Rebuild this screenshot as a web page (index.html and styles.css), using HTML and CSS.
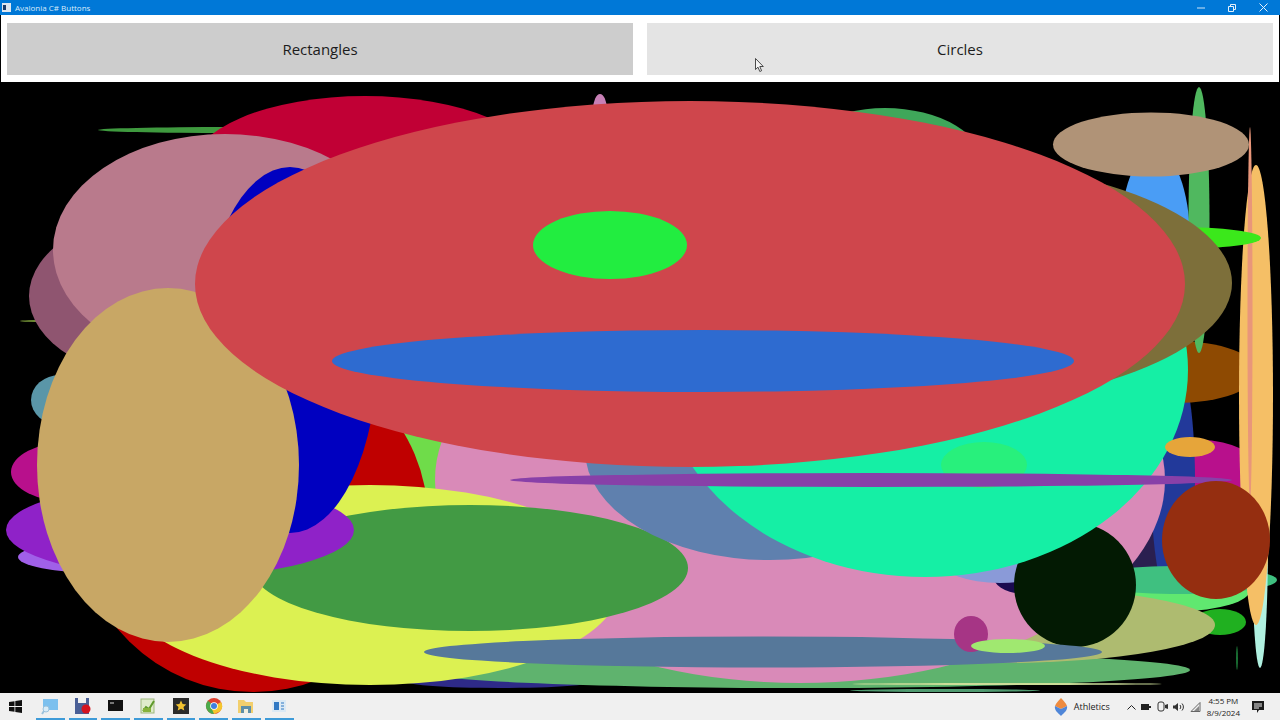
FILE: index.html
```html
<!DOCTYPE html>
<html lang="en">
<head>
    <meta charset="UTF-8">
    <title>Avalonia C# Buttons</title>
    <link rel="stylesheet" href="styles.css">
</head>
<body>
    <div class="titlebar">
        <svg class="app-icon" width="9" height="9" viewBox="0 0 9 9"><rect width="9" height="9" fill="#dfe6ee"/><rect x="1" y="2" width="3" height="5" fill="#1c3c68"/></svg>
        <span class="title">Avalonia C# Buttons</span>
        <div class="win-controls">
            <svg width="8" height="8" viewBox="0 0 8 8"><path d="M0 4h8" stroke="#cfe4f7" fill="none"/></svg>
            <svg width="8" height="8" viewBox="0 0 8 8"><path d="M.5 2.500h5v5h-5zM2.500 2.500v-2h5v5h-2" stroke="#e6f1fb" fill="none"/></svg>
            <svg width="9" height="9" viewBox="0 0 9 9"><path d="M.5.500l8 8M8.500.500l-8 8" stroke="#e6f1fb" fill="none"/></svg>
        </div>
    </div>

    <div class="toolbar">
        <button class="btn btn-pressed">Rectangles</button>
        <button class="btn">Circles</button>
    </div>

    <svg class="canvas" width="1280" height="611" viewBox="0 82 1280 611">
        <ellipse cx="230" cy="130" rx="132" ry="3" fill="#3f9a3f"/>
        <ellipse cx="50" cy="321" rx="30" ry="1" fill="#7a9a3a"/>
        <ellipse cx="365" cy="170" rx="175" ry="74" fill="#c10035"/>
        <ellipse cx="600" cy="110" rx="7" ry="16" fill="#c77fb5"/>
        <ellipse cx="885" cy="168" rx="100" ry="60" fill="#3fa75a"/>
        <ellipse cx="600" cy="480" rx="205" ry="160" fill="#6fdc4a"/>
        <ellipse cx="253" cy="520" rx="175" ry="172" fill="#bf0000"/>
        <ellipse cx="170" cy="296" rx="141" ry="85" fill="#8f5570"/>
        <ellipse cx="225" cy="250" rx="172" ry="116" fill="#b97a8c"/>
        <ellipse cx="60" cy="400" rx="29" ry="25" fill="#5a96a8"/>
        <ellipse cx="70" cy="472" rx="59" ry="30" fill="#b8108c"/>
        <ellipse cx="100" cy="557" rx="82" ry="16" fill="#a060e8"/>
        <ellipse cx="500" cy="680" rx="100" ry="8" fill="#2e2a88"/>
        <ellipse cx="800" cy="670" rx="390" ry="18" fill="#5fb36e"/>
        <ellipse cx="1120" cy="490" rx="70" ry="100" fill="#2a1f50"/>
        <ellipse cx="1200" cy="472" rx="60" ry="32" fill="#b8108c"/>
        <ellipse cx="1173" cy="480" rx="22" ry="125" fill="#22399a"/>
        <ellipse cx="1220" cy="622" rx="26" ry="13" fill="#20b020"/>
        <ellipse cx="1180" cy="590" rx="70" ry="21" fill="#60e870"/>
        <ellipse cx="1180" cy="580" rx="97" ry="14" fill="#3fc080"/>
        <ellipse cx="1000" cy="625" rx="215" ry="38" fill="#aebb70"/>
        <ellipse cx="800" cy="480" rx="365" ry="203" fill="#d98ab8"/>
        <ellipse cx="370" cy="585" rx="250" ry="100" fill="#dcf152"/>
        <ellipse cx="470" cy="568" rx="218" ry="63" fill="#429a44"/>
        <ellipse cx="180" cy="530" rx="174" ry="47" fill="#8f22c8"/>
        <ellipse cx="290" cy="350" rx="88" ry="183" fill="#0000c0"/>
        <ellipse cx="168" cy="465" rx="131" ry="177" fill="#c8a765"/>
        <ellipse cx="770" cy="450" rx="185" ry="110" fill="#5f80ae"/>
        <ellipse cx="1260" cy="540" rx="8" ry="128" fill="#b0f0e0"/>
        <ellipse cx="1020" cy="575" rx="27" ry="18" fill="#1a0a50"/>
        <ellipse cx="1000" cy="560" rx="60" ry="23" fill="#8a9ad8"/>
        <ellipse cx="1075" cy="585" rx="61" ry="62" fill="#031a03"/>
        <ellipse cx="1175" cy="372" rx="83" ry="31" fill="#8e4a02"/>
        <ellipse cx="925" cy="370" rx="263" ry="207" fill="#15efa5"/>
        <ellipse cx="984" cy="465" rx="43" ry="23" fill="#28f07c"/>
        <ellipse cx="1155" cy="240" rx="35" ry="90" fill="#4a9df5"/>
        <ellipse cx="1199" cy="220" rx="10.500" ry="133" fill="#50b85f"/>
        <ellipse cx="1256" cy="395" rx="17" ry="230" fill="#f5bf66"/>
        <ellipse cx="1250" cy="315" rx="2.500" ry="188" fill="#e9967a"/>
        <ellipse cx="1175" cy="238" rx="86" ry="11" fill="#3be81b"/>
        <ellipse cx="902" cy="283" rx="330" ry="125" fill="#7d6f3a"/>
        <ellipse cx="690" cy="284" rx="495" ry="183" fill="#cf464c"/>
        <ellipse cx="610" cy="245" rx="77" ry="34" fill="#22ed40"/>
        <ellipse cx="703" cy="361" rx="371" ry="31" fill="#2e6bd0"/>
        <ellipse cx="1151" cy="144.500" rx="98" ry="32" fill="#b09377"/>
        <ellipse cx="1190" cy="447" rx="25" ry="10" fill="#e6a53a"/>
        <ellipse cx="871" cy="480" rx="361" ry="7" fill="#8840a8"/>
        <ellipse cx="1216" cy="540" rx="54" ry="59" fill="#952e10"/>
        <ellipse cx="763" cy="652" rx="339" ry="15.500" fill="#56789a"/>
        <ellipse cx="971" cy="634" rx="17" ry="18" fill="#a63585"/>
        <ellipse cx="1008" cy="646" rx="37" ry="7" fill="#a0e870"/>
        <ellipse cx="1007" cy="684" rx="155" ry="1" fill="#ccdd99"/>
        <ellipse cx="945" cy="690.500" rx="95" ry="1.500" fill="#4f9a70"/>
        <ellipse cx="1237" cy="658" rx="0.800" ry="12" fill="#208a40"/>
    </svg>

    <footer class="taskbar">
        <svg class="start" width="13" height="13" viewBox="0 0 13 13"><path d="M0 2l5.500-.8V6H0zM6.300 1.100L13 0v6H6.300zM0 7h5.500v4.800L0 11zM6.300 7H13v6l-6.700-1.100z" fill="#111"/></svg>
        <div class="task-icons">
            <div class="task">
                <svg width="18" height="18" viewBox="0 0 18 18"><rect x="2" y="2" width="15" height="11" fill="#7cc0ee"/><circle cx="5" cy="12" r="3" fill="#d8ecf8" stroke="#9cc2dc"/><path d="M3 14l-2 3" stroke="#9cc2dc" stroke-width="2"/></svg>
            </div>
            <div class="task">
                <svg width="18" height="18" viewBox="0 0 18 18"><path d="M1 1h3v5h8V1h3v16H1z" fill="#4a5f96"/><circle cx="12" cy="12" r="4.500" fill="#d3131f"/></svg>
            </div>
            <div class="task">
                <svg width="18" height="18" viewBox="0 0 18 18"><rect x="1" y="3" width="15" height="11" fill="#111"/><path d="M3 6h4" stroke="#ddd"/></svg>
            </div>
            <div class="task">
                <svg width="18" height="18" viewBox="0 0 18 18"><rect x="2" y="2" width="13" height="14" fill="#dfeccb" stroke="#9db77d"/><path d="M4 14l3-4 3 2 5-8" stroke="#5f9a2c" stroke-width="2" fill="none"/><rect x="4" y="11" width="8" height="4" fill="#86b23a"/></svg>
            </div>
            <div class="task">
                <svg width="18" height="18" viewBox="0 0 18 18"><rect x="1" y="1" width="16" height="16" fill="#2b2b2b"/><path d="M9 3.500l1.600 3.500 3.700.4-2.800 2.500.8 3.700L9 11.800 5.700 13.600l.8-3.700L3.700 7.400 7.400 7z" fill="#f2c230"/></svg>
            </div>
            <div class="task">
                <svg width="18" height="18" viewBox="0 0 18 18"><circle cx="9" cy="9" r="8" fill="#e0402f"/><path d="M9 9L16 5a8 8 0 0 1-1 9.500L9 17 5 12z" fill="#f5c62e"/><path d="M9 9L2.100 13A8 8 0 0 1 3 3.700z" fill="#4bab4c"/><path d="M9 17a8 8 0 0 1-6.900-4L6 10z" fill="#4bab4c"/><circle cx="9" cy="9" r="3.800" fill="#fff"/><circle cx="9" cy="9" r="3" fill="#3f7fe0"/></svg>
            </div>
            <div class="task">
                <svg width="18" height="18" viewBox="0 0 18 18"><path d="M1 3h6l2 2h7v11H1z" fill="#f2cf6d"/><rect x="4" y="9" width="10" height="7" fill="#5d8fa8"/><rect x="7" y="12" width="4" height="4" fill="#f2eedd"/></svg>
            </div>
            <div class="task">
                <svg width="18" height="18" viewBox="0 0 18 18"><rect x="2" y="3" width="14" height="12" fill="#dbe9f4"/><rect x="4" y="5" width="5" height="8" fill="#2f78c4"/><path d="M11 6h3M11 9h3M11 12h3" stroke="#2f78c4"/></svg>
            </div>
        </div>
        <div class="tray">
            <svg width="14" height="18" viewBox="0 0 14 18"><path d="M7 0c2 2 5 5 6 8L7 11 1 8c1-3 4-6 6-8z" fill="#ee8b3f"/><path d="M1 8l6 3 6-3c1 4-3 7-6 10C4 15 0 12 1 8z" fill="#4f86d8"/></svg>
            <span class="tray-label">Athletics</span>
            <div class="tray-icons">
                <svg width="9" height="6" viewBox="0 0 9 6"><path d="M.5 5.500l4-4 4 4" stroke="#222" fill="none"/></svg>
                <svg width="10" height="8" viewBox="0 0 10 8"><rect x="0" y="1" width="8" height="6" fill="#222"/><rect x="8" y="3" width="2" height="2" fill="#222"/></svg>
                <svg width="11" height="11" viewBox="0 0 11 11"><rect x="1" y="1" width="6" height="9" rx="2" fill="none" stroke="#333"/><path d="M8 4l3-1v5l-3-1z" fill="#333"/></svg>
                <svg width="11" height="10" viewBox="0 0 11 10"><path d="M0 3.500h2L5 1v8L2 6.500H0z" fill="#333"/><path d="M7 3a3 3 0 0 1 0 4M9 1.500a5 5 0 0 1 0 7" stroke="#333" fill="none"/></svg>
                <svg width="11" height="10" viewBox="0 0 11 10"><path d="M1 9.500L10 .5v9z" fill="none" stroke="#666"/><path d="M4 9l5-5v5z" fill="#888"/></svg>
            </div>
            <div class="clock">
                <span>4:55 PM</span>
                <span>8/9/2024</span>
            </div>
            <svg class="notify" width="12" height="12" viewBox="0 0 12 12"><path d="M0 0h12v9H7l-2 3V9H0z" fill="#1b1b1b"/><path d="M2 3h8M2 5h8M2 7h5" stroke="#f0f0f0"/></svg>
        </div>
    </footer>

    <svg class="cursor" width="10" height="15" viewBox="0 0 10 15"><path d="M.5.500v11l2.500-2.300 1.800 4.300 1.800-.8-1.800-4.200h3.500z" fill="#f4f4f4" stroke="#222" stroke-width=".8"/></svg>
</body>
</html>
```

FILE: styles.css
```css
* {
    box-sizing: border-box;
}
body {
    margin: 0;
    width: 1280px;
    height: 720px;
    overflow: hidden;
    background: #000;
    font-family: "Open Sans", "Noto Sans", sans-serif;
    position: relative;
}
.titlebar {
    height: 15px;
    background: #0078d7;
    color: #d9ebfa;
    display: flex;
    align-items: center;
    padding-left: 2px;
    font-size: 8px;
}
.title {
    margin-left: 4px;
}
.win-controls {
    margin-left: auto;
    display: flex;
    align-items: center;
    gap: 23px;
    padding-right: 12px;
}
.toolbar {
    height: 67px;
    margin: 0 1px;
    padding: 8px 6px 7px;
    background: #fff;
    display: flex;
    gap: 14px;
}
.btn {
    flex: 1;
    border: none;
    background: #e4e4e4;
    color: #1c1c1c;
    font-family: inherit;
    font-size: 15px;
}
.btn-pressed {
    background: #cdcdcd;
}
.canvas {
    display: block;
}
.taskbar {
    height: 27px;
    background: #f0f0f0;
    display: flex;
    align-items: center;
    position: relative;
}
.start {
    margin-left: 9px;
}
.task-icons {
    display: flex;
    margin-left: 12px;
}
.task {
    width: 32.700px;
    height: 27px;
    display: flex;
    align-items: center;
    justify-content: center;
    border-bottom: 2px solid #fff;
    border-image: linear-gradient(to right, transparent 10%, #3e9bd8 10%, #3e9bd8 90%, transparent 90%) 1;
}
.tray {
    margin-left: auto;
    display: flex;
    align-items: center;
    color: #222;
}
.tray-label {
    font-size: 9px;
    margin: 0 17px 0 6px;
}
.tray-icons {
    display: flex;
    align-items: center;
    gap: 5.500px;
}
.clock {
    display: flex;
    flex-direction: column;
    align-items: center;
    font-size: 8px;
    line-height: 12px;
    margin: 0 12px 0 6px;
}
.notify {
    margin-right: 16px;
}
.cursor {
    position: absolute;
    left: 755px;
    top: 58px;
}
```
